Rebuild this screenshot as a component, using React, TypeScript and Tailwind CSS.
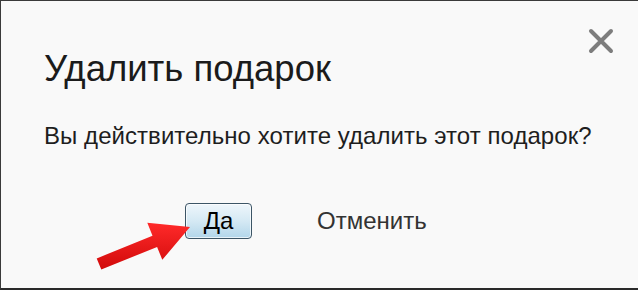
import React from 'react';

const CloseIcon = () => (
  <svg width="26" height="26" viewBox="0 0 26 26" className="block">
    <path d="M3 3 L23 23 M23 3 L3 23" stroke="#7d7d7d" strokeWidth="4" strokeLinecap="round" />
  </svg>
);

// red pointer drawn over the dialog
const Arrow = () => (
  <svg width="638" height="290" viewBox="0 0 638 290" className="absolute inset-0 pointer-events-none">
    <defs>
      <linearGradient id="arrowRed" x1="0" y1="0" x2="0" y2="1">
        <stop offset="0" stopColor="#ff2a2a" />
        <stop offset="1" stopColor="#d10a0a" />
      </linearGradient>
    </defs>
    <polygon
      points="95.7,257.4 151.5,234.7 146.3,221.8 189,226 161.3,258.8 156.1,245.9 100.3,268.6"
      fill="url(#arrowRed)"
    />
  </svg>
);

export default function App() {
  return (
    <div className="relative w-[638px] h-[290px] overflow-hidden bg-[#f9f9f9] border-t border-l border-[#3a3a3a] border-b-2 border-b-[#2a2a2a] font-['Liberation_Sans',Arial,sans-serif]">
      <div className="flex flex-col pl-[43px] pt-[27px]">
        <div className="flex justify-between items-start">
          <h1 className="mt-[23px] text-[36.5px] leading-none text-[#1b1b1b] font-normal">Удалить подарок</h1>
          <button className="mr-[24px] p-0">
            <CloseIcon />
          </button>
        </div>

        <p className="mt-[36px] text-[24px] leading-none tracking-[0.05px] text-[#1e1e1e]">
          Вы действительно хотите удалить этот подарок?
        </p>

        <div className="mt-[55px] flex items-center pl-[141px]">
          <button className="w-[67px] h-[36px] rounded-[4px] border-[1.5px] border-[#3c5566] bg-gradient-to-b from-[#eef6fb] via-[#d5e9f4] to-[#b2d6ea] shadow-[inset_0_0_0_1px_rgba(255,255,255,0.7)] text-[24px] leading-none text-black">
            Да
          </button>
          <button className="ml-[65px] text-[24px] leading-none text-[#333]">Отменить</button>
        </div>
      </div>
      <Arrow />
    </div>
  );
}
